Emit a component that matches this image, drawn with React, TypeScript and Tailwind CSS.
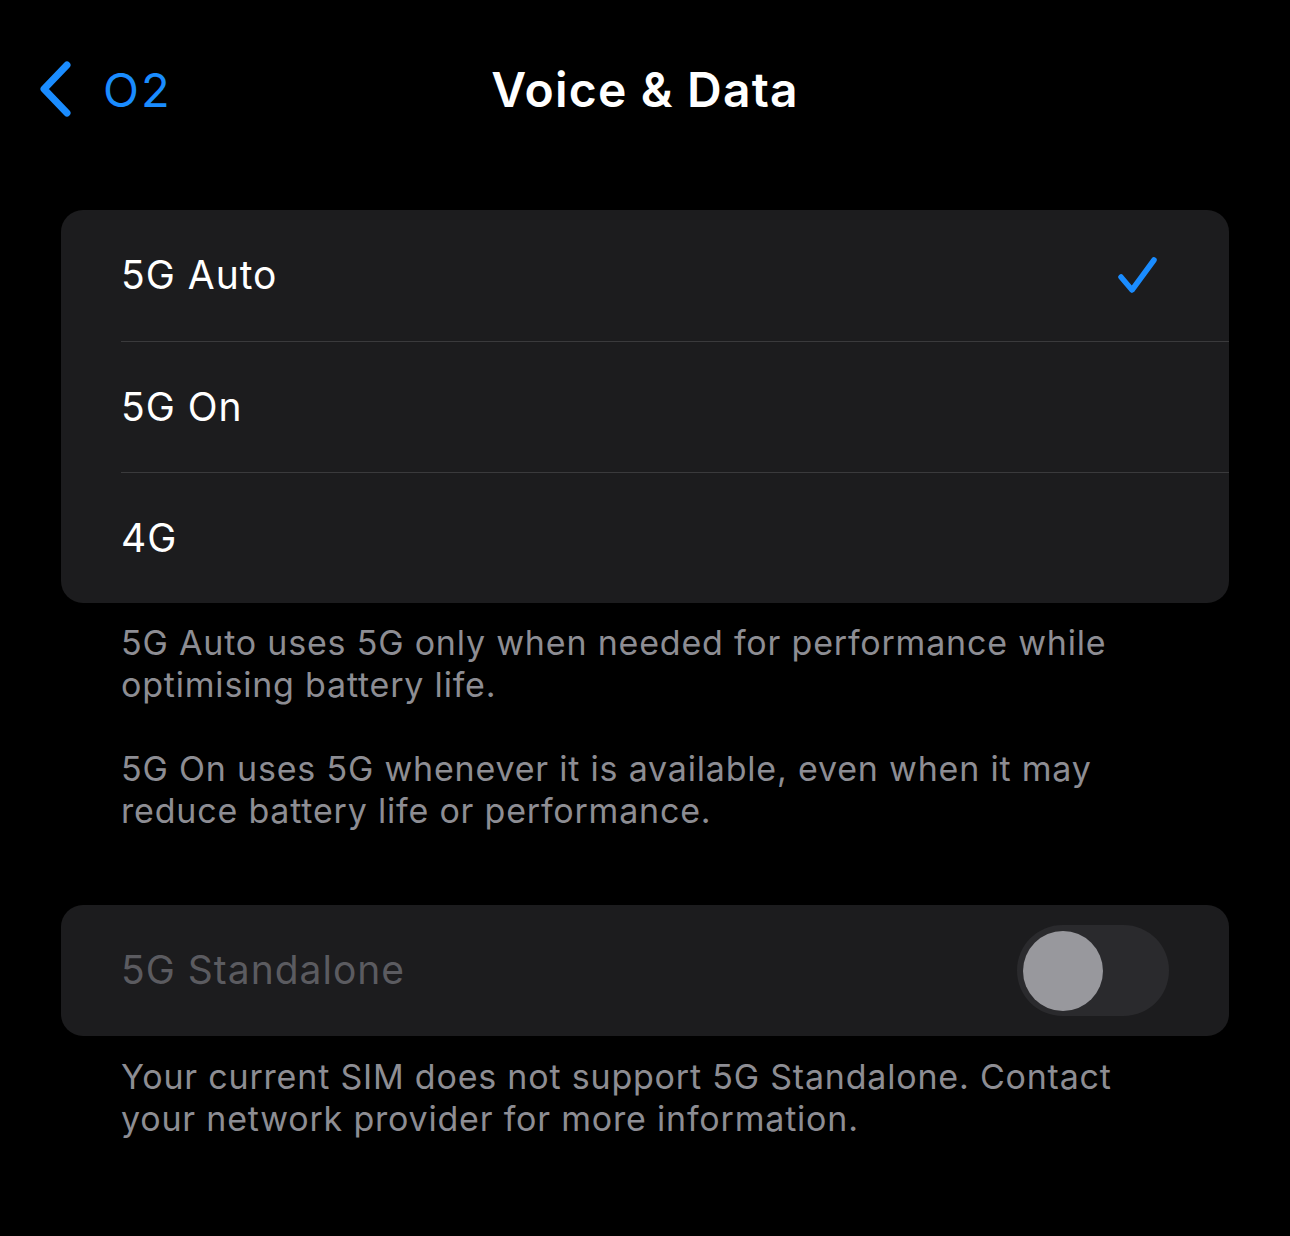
import { useState } from 'react';

type Mode = '5G Auto' | '5G On' | '4G';

const modes: Mode[] = ['5G Auto', '5G On', '4G'];

const Chevron = () => (
  <svg width="34" height="56" viewBox="0 0 34 56" fill="none">
    <path d="M29 4 L6 28 L29 52" stroke="#1a8cff" strokeWidth="7" strokeLinecap="round" strokeLinejoin="round" />
  </svg>
);

const Check = () => (
  <svg width="42" height="40" viewBox="0 0 42 40" fill="none">
    <path d="M4 21 L15 34 L37 4" stroke="#1a8cff" strokeWidth="5.5" strokeLinecap="round" strokeLinejoin="round" />
  </svg>
);

export default function App() {
  const [mode, setMode] = useState<Mode>('5G Auto');

  return (
    <div className="min-h-[1236px] w-[1290px] bg-black text-white" style={{ fontFamily: 'Inter, "Noto Sans", sans-serif' }}>
      {/* nav bar */}
      <div className="relative flex h-[180px] items-center justify-center pb-[1px]">
        <button className="absolute left-[38px] top-[61px] flex items-center gap-[31px] text-[#1a8cff]">
          <Chevron />
          <span className="text-[47px] leading-none tracking-[2px]">O2</span>
        </button>
        <h1 className="text-[48px] font-semibold tracking-[1.2px]">Voice &amp; Data</h1>
      </div>

      <div className="px-[61px] pt-[30px]">
        <div className="overflow-hidden rounded-[22px] bg-[#1c1c1e]">
          {modes.map((m, i) => (
            <button
              key={m}
              onClick={() => setMode(m)}
              className="flex h-[131px] w-full items-stretch pl-[60px] text-left"
            >
              <div className={`flex flex-1 items-center justify-between pr-[70px] ${i > 0 ? 'border-t border-[#3a3a3c]' : ''}`}>
                <span className="text-[39px] tracking-[1px]">{m}</span>
                {mode === m && <Check />}
              </div>
            </button>
          ))}
        </div>

        <div className="px-[60px] pt-[19px] text-[34px] leading-[42px] tracking-[0.8px] text-[#8d8d93]">
          <p>5G Auto uses 5G only when needed for performance while optimising battery life.</p>
          <p className="mt-[42px]">5G On uses 5G whenever it is available, even when it may reduce battery life or performance.</p>
        </div>

        <div className="mt-[73px] flex h-[131px] items-center justify-between rounded-[22px] bg-[#1c1c1e] pl-[60px] pr-[60px]">
          <span className="text-[39px] tracking-[1px] text-[#5b5b60]">5G Standalone</span>
          <div className="flex h-[91px] w-[152px] items-center rounded-full bg-[#2a2a2d] px-[6px]">
            <div className="h-[80px] w-[80px] rounded-full bg-[#98989d]" />
          </div>
        </div>

        <div className="px-[60px] pt-[20px] text-[34px] leading-[42px] tracking-[0.8px] text-[#8d8d93]">
          <p>Your current SIM does not support 5G Standalone. Contact your network provider for more information.</p>
        </div>
      </div>
    </div>
  );
}
